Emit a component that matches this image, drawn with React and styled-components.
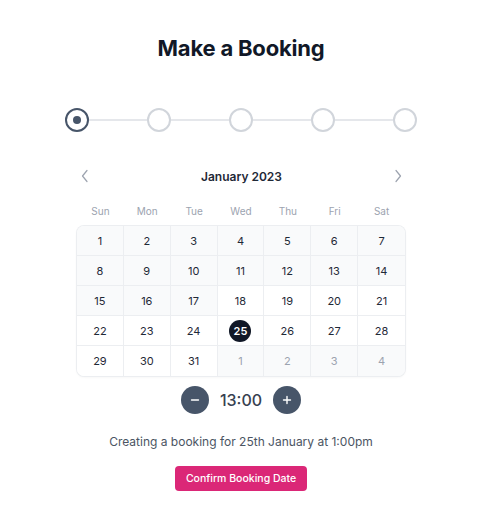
import React from "react";
import styled, { createGlobalStyle } from "styled-components";

const GlobalStyle = createGlobalStyle`
  body {
    margin: 0;
    background: #ffffff;
    font-family: "Inter", "Liberation Sans", sans-serif;
  }
`;

const STEPS = 5;
const WEEKDAYS = ["Sun", "Mon", "Tue", "Wed", "Thu", "Fri", "Sat"];
const TODAY = 18;
const SELECTED = 25;

const days = [];
for (let d = 1; d <= 31; d++) days.push({ day: d, outside: false });
for (let d = 1; d <= 4; d++) days.push({ day: d, outside: true });

const App = () => {
  return (
    <Page>
      <GlobalStyle />
      <Title>Make a Booking</Title>
      <Stepper>
        {Array.from({ length: STEPS }).map((_, i) => (
          <React.Fragment key={i}>
            {i > 0 && <StepLine />}
            <StepDot $active={i === 0} />
          </React.Fragment>
        ))}
      </Stepper>

      <Calendar>
        <MonthHeader>
          <Arrow aria-label="previous month">
            <svg width="10" height="14" viewBox="0 0 10 14" fill="none">
              <path d="M7 1.5L2.5 7 7 12.5" stroke="#9ca3af" strokeWidth="1.2" strokeLinecap="round" strokeLinejoin="round" />
            </svg>
          </Arrow>
          <MonthLabel>January 2023</MonthLabel>
          <Arrow aria-label="next month">
            <svg width="10" height="14" viewBox="0 0 10 14" fill="none">
              <path d="M3 1.5L7.5 7 3 12.5" stroke="#9ca3af" strokeWidth="1.2" strokeLinecap="round" strokeLinejoin="round" />
            </svg>
          </Arrow>
        </MonthHeader>

        <Weekdays>
          {WEEKDAYS.map((w) => (
            <Weekday key={w}>{w}</Weekday>
          ))}
        </Weekdays>

        <Grid>
          {days.map((d, i) => (
            <Cell
              key={i}
              $muted={d.outside || d.day < TODAY}
              $outside={d.outside}
              $lastCol={i % 7 === 6}
              $lastRow={i >= 28}
            >
              {!d.outside && d.day === SELECTED ? (
                <Selected>{d.day}</Selected>
              ) : (
                d.day
              )}
            </Cell>
          ))}
        </Grid>
      </Calendar>

      <TimeRow>
        <RoundButton aria-label="earlier">
          <svg width="12" height="12" viewBox="0 0 12 12">
            <path d="M2.5 6h7" stroke="#fff" strokeWidth="1.4" strokeLinecap="round" />
          </svg>
        </RoundButton>
        <Time>13:00</Time>
        <RoundButton aria-label="later">
          <svg width="12" height="12" viewBox="0 0 12 12">
            <path d="M2.5 6h7M6 2.5v7" stroke="#fff" strokeWidth="1.4" strokeLinecap="round" />
          </svg>
        </RoundButton>
      </TimeRow>

      <Summary>Creating a booking for 25th January at 1:00pm</Summary>

      <ConfirmButton>Confirm Booking Date</ConfirmButton>
    </Page>
  );
};

const Page = styled.div`
  width: 482px;
  display: flex;
  flex-direction: column;
  align-items: center;
  padding-top: 33px;
`;

const Title = styled.h1`
  margin: 0;
  font-size: 22px;
  line-height: 30px;
  font-weight: 700;
  color: #111827;
  letter-spacing: -0.2px;
`;

const Stepper = styled.div`
  margin-top: 45px;
  width: 352px;
  display: flex;
  align-items: center;
`;

const StepDot = styled.div`
  width: 24px;
  height: 24px;
  box-sizing: border-box;
  border-radius: 50%;
  border: 2px solid ${(p) => (p.$active ? "#475569" : "#d1d5db")};
  display: flex;
  align-items: center;
  justify-content: center;
  flex-shrink: 0;
  &::after {
    content: "";
    display: ${(p) => (p.$active ? "block" : "none")};
    width: 8px;
    height: 8px;
    border-radius: 50%;
    background: #475569;
  }
`;

const StepLine = styled.div`
  flex: 1;
  height: 2px;
  background: #e5e7eb;
`;

const Calendar = styled.div`
  margin-top: 32px;
  width: 328px;
`;

const MonthHeader = styled.div`
  display: flex;
  align-items: center;
  justify-content: space-between;
  height: 24px;
  margin: 0 -4px 0 -3px;
`;

const Arrow = styled.button`
  border: none;
  background: none;
  padding: 0;
  width: 22px;
  height: 22px;
  display: flex;
  align-items: center;
  justify-content: center;
  cursor: pointer;
`;

const MonthLabel = styled.div`
  font-size: 12px;
  font-weight: 600;
  color: #1f2937;
`;

const Weekdays = styled.div`
  display: grid;
  grid-template-columns: repeat(7, 1fr);
  margin-top: 13px;
  height: 20px;
  align-items: center;
`;

const Weekday = styled.div`
  text-align: center;
  font-size: 10px;
  color: #9ca3af;
`;

const Grid = styled.div`
  margin-top: 5px;
  display: grid;
  grid-template-columns: repeat(7, 1fr);
  border-radius: 7px;
  overflow: hidden;
  box-shadow: 0 0 0 1px #eceef1, 0 1px 3px rgba(0, 0, 0, 0.06);
`;

const Cell = styled.div`
  box-sizing: border-box;
  height: 30px;
  display: flex;
  align-items: center;
  justify-content: center;
  font-size: 11px;
  color: ${(p) => (p.$outside ? "#9ca3af" : "#1f2937")};
  background: ${(p) => (p.$muted ? "#f9fafb" : "#ffffff")};
  border-right: ${(p) => (p.$lastCol ? "none" : "1px solid #eceef1")};
  border-bottom: ${(p) => (p.$lastRow ? "none" : "1px solid #eceef1")};
`;

const Selected = styled.span`
  width: 22px;
  height: 22px;
  border-radius: 50%;
  background: #111827;
  color: #ffffff;
  font-weight: 600;
  display: flex;
  align-items: center;
  justify-content: center;
`;

const TimeRow = styled.div`
  margin-top: 10px;
  display: flex;
  align-items: center;
  gap: 11px;
`;

const RoundButton = styled.button`
  width: 28px;
  height: 28px;
  border-radius: 50%;
  border: none;
  background: #475569;
  padding: 0;
  display: flex;
  align-items: center;
  justify-content: center;
  cursor: pointer;
`;

const Time = styled.div`
  font-size: 16px;
  font-weight: 500;
  color: #374151;
  min-width: 40px;
  text-align: center;
`;

const Summary = styled.p`
  margin: 20px 0 0;
  font-size: 12px;
  color: #4b5563;
`;

const ConfirmButton = styled.button`
  margin-top: 17px;
  width: 132px;
  height: 25px;
  border: none;
  border-radius: 4px;
  background: #db2777;
  color: #ffffff;
  font-family: "Inter", "Liberation Sans", sans-serif;
  font-size: 10.5px;
  font-weight: 500;
  padding: 0;
  cursor: pointer;
`;

export default App;
